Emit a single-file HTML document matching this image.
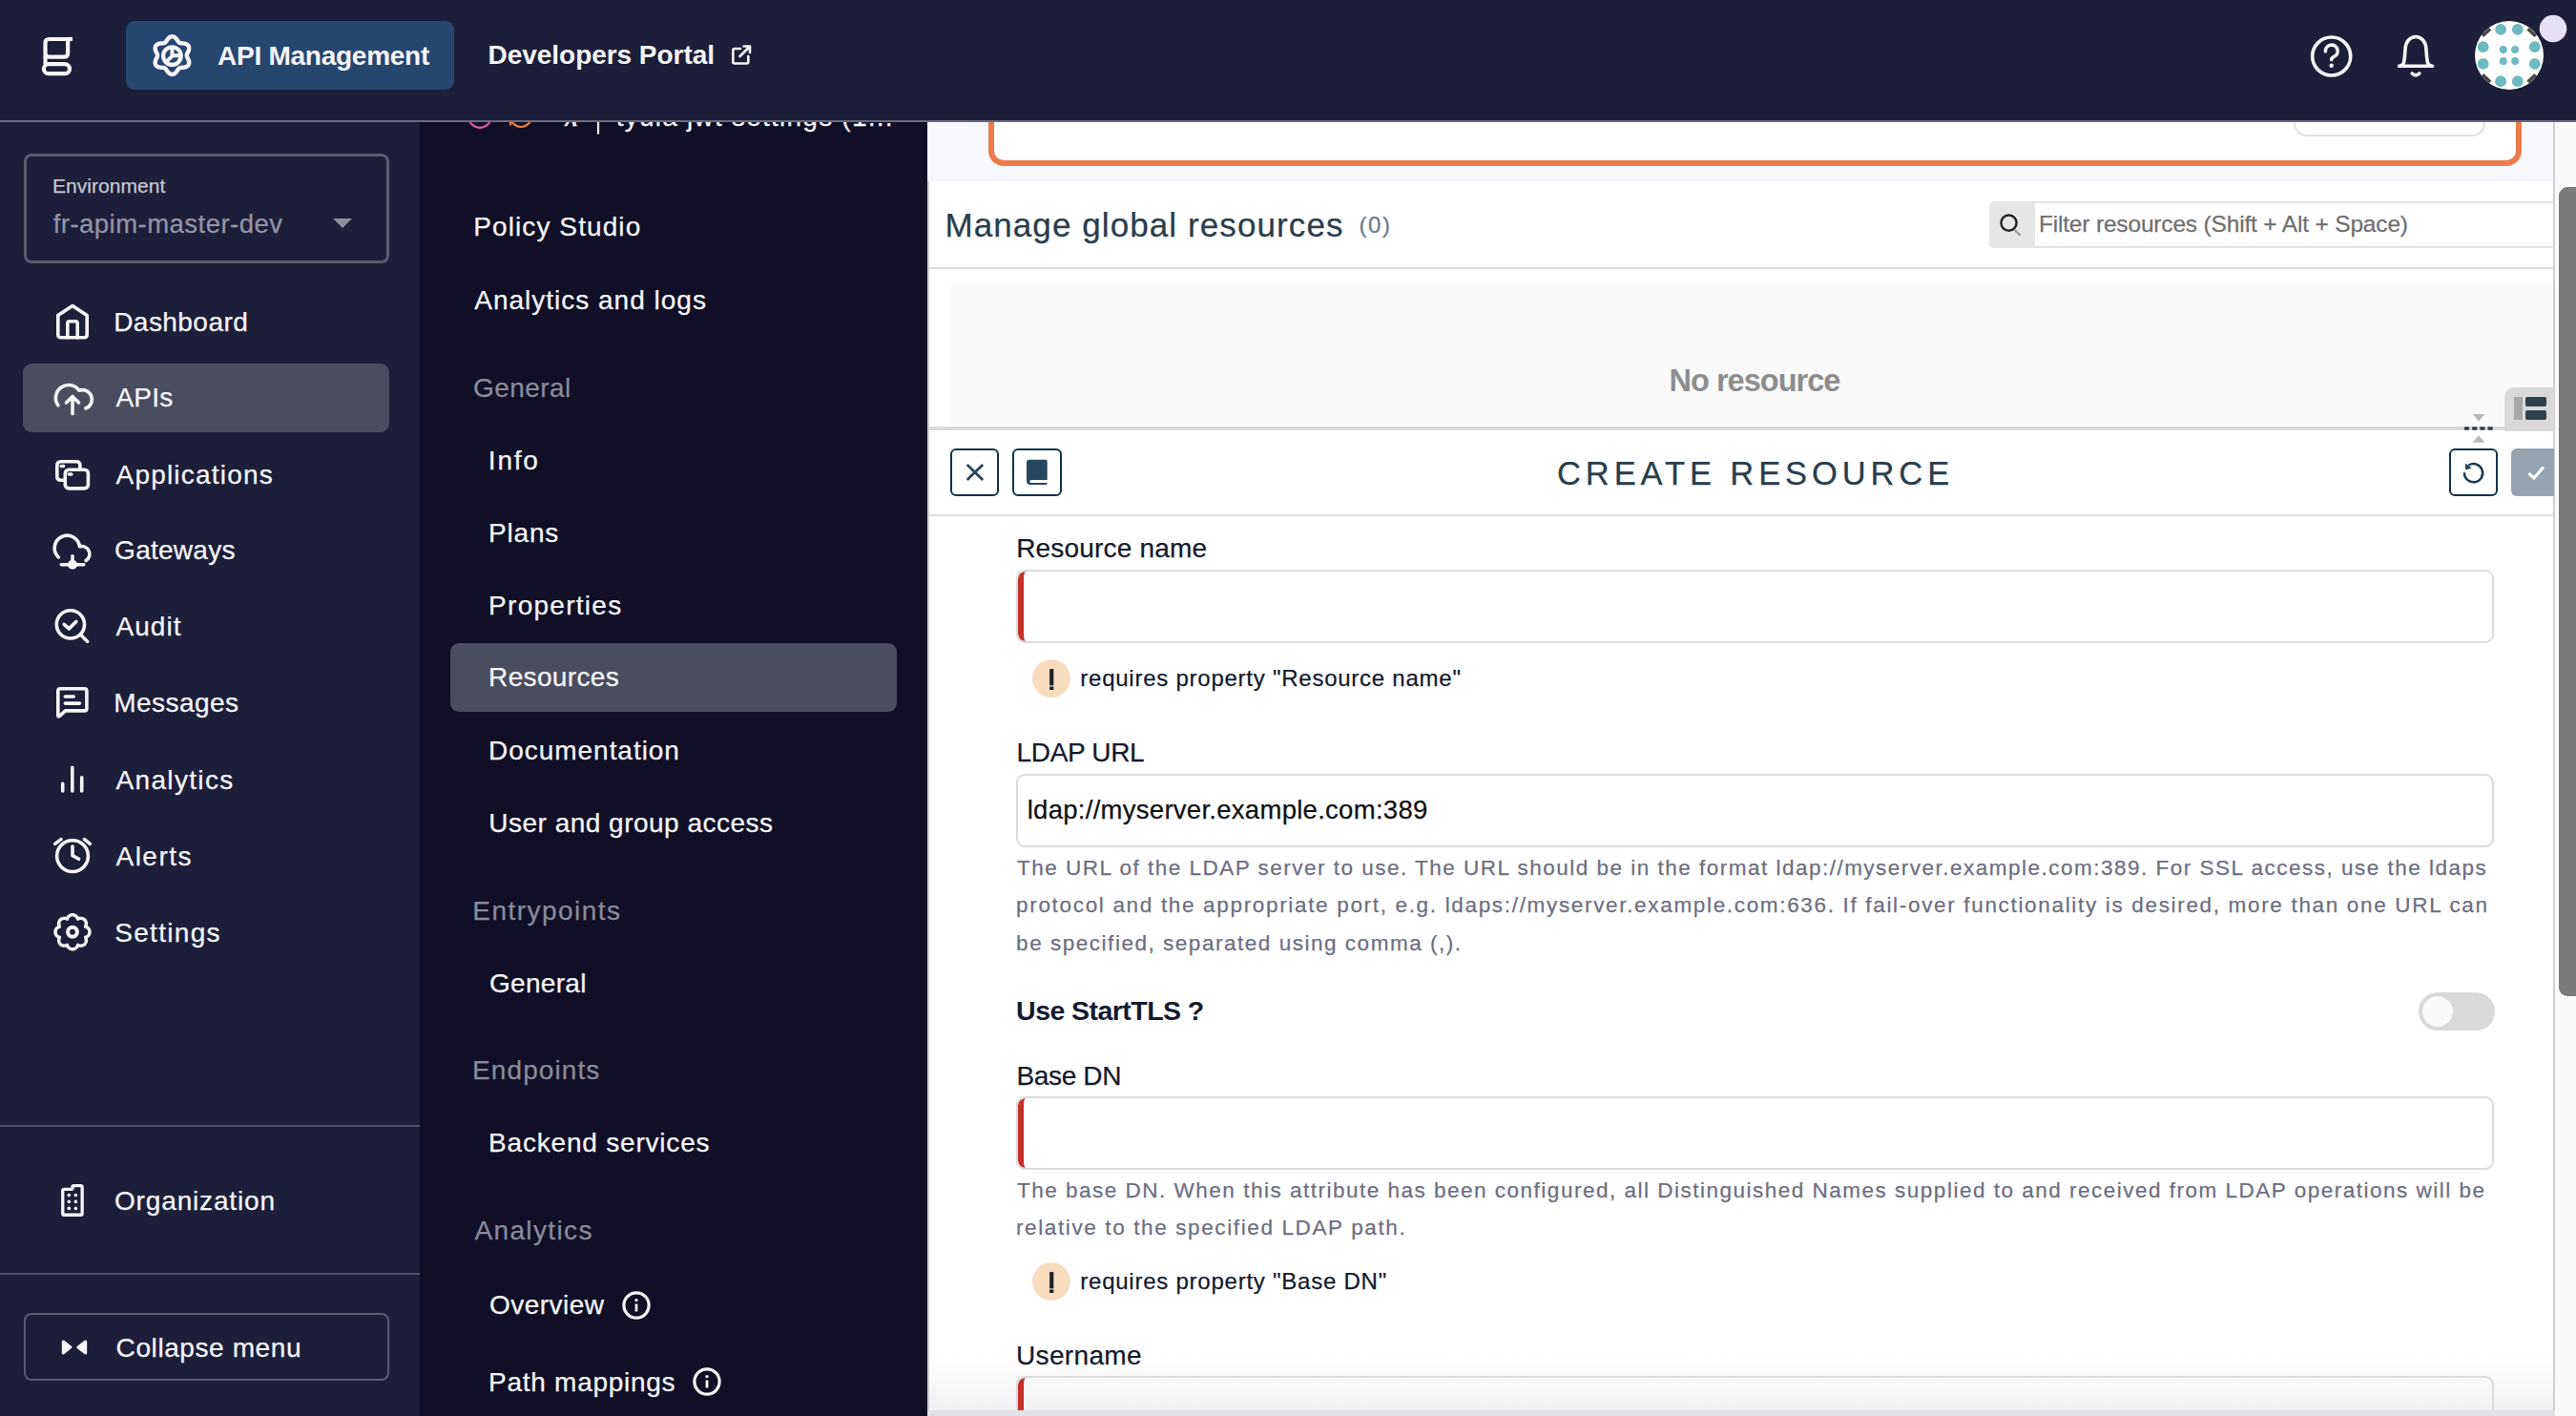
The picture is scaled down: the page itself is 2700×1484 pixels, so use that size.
<!DOCTYPE html>
<html><head><meta charset="utf-8"><style>
html,body{margin:0;padding:0}
body{width:2700px;height:1484px;overflow:hidden;position:relative;font-family:"Liberation Sans",sans-serif;background:#fff}
.t{position:absolute;white-space:pre}
.t4{-webkit-text-stroke:0.25px currentColor}
</style></head><body>
<div style="position:absolute;left:0px;top:0px;width:2700px;height:1484px;background:#ffffff"></div>
<div style="position:absolute;left:0px;top:128px;width:440px;height:1356px;background:#1d1e3a"></div>
<div style="position:absolute;left:440px;top:128px;width:532px;height:1356px;background:#100f27"></div>
<div style="position:absolute;left:972px;top:128px;width:1705px;height:62px;background:#f6f8fc"></div>
<div style="position:absolute;left:1036px;top:60px;width:1607px;height:114px;border:6px solid #ec7a4b;border-radius:16px;background:#fff;box-sizing:border-box"></div>
<div style="position:absolute;left:2404px;top:60px;width:201px;height:83px;border:2px solid #e2e2e2;border-radius:14px;box-sizing:border-box"></div>
<div style="position:absolute;left:972px;top:190px;width:2px;height:1294px;background:#cfcfcf"></div>
<div style="position:absolute;left:2676px;top:128px;width:2px;height:1356px;background:#d0d0d0"></div>
<div style="position:absolute;left:2678px;top:128px;width:22px;height:1356px;background:#fafafa"></div>
<div style="position:absolute;left:2682px;top:196px;width:18px;height:848px;background:#7b7b7b;border-radius:9px 0 0 9px"></div>
<svg style="position:absolute;left:470px;top:100px" width="500" height="50" viewBox="0 0 500 50" fill="none"><circle cx="33" cy="22" r="11.8" stroke="#e05aa6" stroke-width="2.2"/><circle cx="76" cy="22" r="11" stroke="#ee7f3b" stroke-width="2.2"/><path d="M65 0 V31.5" stroke="#ee7f3b" stroke-width="2.2"/><path d="M157 40.5 V28" stroke="#f5f5fa" stroke-width="2.2"/></svg>
<div class="t t4" style="left:591.10px;top:101.50px;font-size:28px;line-height:42px;color:#f5f5fa;letter-spacing:-4.900px;font-weight:400;">x/</div>
<div class="t t4" style="left:645.80px;top:101.50px;font-size:28px;line-height:42px;color:#f5f5fa;letter-spacing:1.230px;font-weight:400;">tyuia jwt settings (1...</div>
<div style="position:absolute;left:0px;top:0px;width:2700px;height:126px;background:#1d1e3a"></div>
<div style="position:absolute;left:0px;top:126px;width:2700px;height:2px;background:#6a6b7f"></div>
<div style="position:absolute;left:132px;top:22px;width:344px;height:72px;background:#27466f;border-radius:9px"></div>
<div class="t" style="left:228.00px;top:37.50px;font-size:28px;line-height:42px;color:#f5f5fa;letter-spacing:-0.254px;font-weight:700;">API Management</div>
<div class="t" style="left:511.60px;top:37.30px;font-size:28px;line-height:42px;color:#f5f5fa;letter-spacing:-0.044px;font-weight:700;">Developers Portal</div>
<div style="position:absolute;left:25px;top:161px;width:383px;height:115px;border:3px solid #5b5c70;border-radius:8px;box-sizing:border-box"></div>
<div class="t t4" style="left:54.90px;top:178.80px;font-size:21px;line-height:32px;color:#c8c8d2;letter-spacing:0.060px;font-weight:400;">Environment</div>
<div class="t t4" style="left:55.70px;top:214.20px;font-size:27.5px;line-height:41px;color:#9394a4;letter-spacing:0.476px;font-weight:400;">fr-apim-master-dev</div>
<div style="position:absolute;left:24px;top:381px;width:384px;height:72px;background:#4a4d60;border-radius:9px"></div>
<div class="t t4" style="left:119.20px;top:316.60px;font-size:28px;line-height:42px;color:#f5f5fa;letter-spacing:0.450px;font-weight:400;">Dashboard</div>
<div class="t t4" style="left:121.50px;top:396.00px;font-size:28px;line-height:42px;color:#f5f5fa;letter-spacing:0.167px;font-weight:400;">APIs</div>
<div class="t t4" style="left:121.50px;top:477.10px;font-size:28px;line-height:42px;color:#f5f5fa;letter-spacing:1.200px;font-weight:400;">Applications</div>
<div class="t t4" style="left:120.10px;top:556.00px;font-size:28px;line-height:42px;color:#f5f5fa;letter-spacing:0.257px;font-weight:400;">Gateways</div>
<div class="t t4" style="left:121.50px;top:636.10px;font-size:28px;line-height:42px;color:#f5f5fa;letter-spacing:1.025px;font-weight:400;">Audit</div>
<div class="t t4" style="left:119.20px;top:715.50px;font-size:28px;line-height:42px;color:#f5f5fa;letter-spacing:0.457px;font-weight:400;">Messages</div>
<div class="t t4" style="left:121.50px;top:796.50px;font-size:28px;line-height:42px;color:#f5f5fa;letter-spacing:1.337px;font-weight:400;">Analytics</div>
<div class="t t4" style="left:121.50px;top:876.50px;font-size:28px;line-height:42px;color:#f5f5fa;letter-spacing:1.480px;font-weight:400;">Alerts</div>
<div class="t t4" style="left:120.20px;top:956.50px;font-size:28px;line-height:42px;color:#f5f5fa;letter-spacing:1.314px;font-weight:400;">Settings</div>
<div style="position:absolute;left:0px;top:1179px;width:440px;height:2px;#5b5c70;background:#4d4e63"></div>
<div class="t t4" style="left:120.00px;top:1237.50px;font-size:28px;line-height:42px;color:#f5f5fa;letter-spacing:0.845px;font-weight:400;">Organization</div>
<div style="position:absolute;left:0px;top:1334px;width:440px;height:2px;background:#4d4e63"></div>
<div style="position:absolute;left:25px;top:1376px;width:383px;height:71px;border:2px solid #5b5c70;border-radius:8px;box-sizing:border-box"></div>
<div class="t t4" style="left:121.60px;top:1391.50px;font-size:28px;line-height:42px;color:#f5f5fa;letter-spacing:0.592px;font-weight:400;">Collapse menu</div>
<div style="position:absolute;left:472px;top:674px;width:468px;height:72px;background:#4a4d60;border-radius:9px"></div>
<div class="t t4" style="left:496.20px;top:217.30px;font-size:28px;line-height:42px;color:#f5f5fa;letter-spacing:1.100px;font-weight:400;">Policy Studio</div>
<div class="t t4" style="left:497.30px;top:294.10px;font-size:28px;line-height:42px;color:#f5f5fa;letter-spacing:0.994px;font-weight:400;">Analytics and logs</div>
<div class="t t4" style="left:496.00px;top:385.50px;font-size:28px;line-height:42px;color:#8a8a9c;letter-spacing:0.450px;font-weight:400;">General</div>
<div class="t t4" style="left:511.80px;top:461.80px;font-size:28px;line-height:42px;color:#f5f5fa;letter-spacing:1.800px;font-weight:400;">Info</div>
<div class="t t4" style="left:512.10px;top:537.70px;font-size:28px;line-height:42px;color:#f5f5fa;letter-spacing:0.800px;font-weight:400;">Plans</div>
<div class="t t4" style="left:512.10px;top:613.50px;font-size:28px;line-height:42px;color:#f5f5fa;letter-spacing:1.278px;font-weight:400;">Properties</div>
<div class="t t4" style="left:512.10px;top:689.20px;font-size:28px;line-height:42px;color:#f5f5fa;letter-spacing:0.350px;font-weight:400;">Resources</div>
<div class="t t4" style="left:512.10px;top:765.50px;font-size:28px;line-height:42px;color:#f5f5fa;letter-spacing:0.958px;font-weight:400;">Documentation</div>
<div class="t t4" style="left:512.30px;top:842.20px;font-size:28px;line-height:42px;color:#f5f5fa;letter-spacing:0.490px;font-weight:400;">User and group access</div>
<div class="t t4" style="left:495.30px;top:934.00px;font-size:28px;line-height:42px;color:#8a8a9c;letter-spacing:1.460px;font-weight:400;">Entrypoints</div>
<div class="t t4" style="left:513.00px;top:1009.50px;font-size:28px;line-height:42px;color:#f5f5fa;letter-spacing:0.300px;font-weight:400;">General</div>
<div class="t t4" style="left:495.10px;top:1101.10px;font-size:28px;line-height:42px;color:#8a8a9c;letter-spacing:1.087px;font-weight:400;">Endpoints</div>
<div class="t t4" style="left:512.10px;top:1177.30px;font-size:28px;line-height:42px;color:#f5f5fa;letter-spacing:0.800px;font-weight:400;">Backend services</div>
<div class="t t4" style="left:497.40px;top:1269.20px;font-size:28px;line-height:42px;color:#8a8a9c;letter-spacing:1.375px;font-weight:400;">Analytics</div>
<div class="t t4" style="left:513.10px;top:1347.10px;font-size:28px;line-height:42px;color:#f5f5fa;letter-spacing:0.443px;font-weight:400;">Overview</div>
<div class="t t4" style="left:512.10px;top:1427.50px;font-size:28px;line-height:42px;color:#f5f5fa;letter-spacing:0.725px;font-weight:400;">Path mappings</div>
<div class="t t4" style="left:990.40px;top:209.50px;font-size:35px;line-height:52px;color:#2b3d4c;letter-spacing:1.095px;font-weight:400;">Manage global resources</div>
<div class="t t4" style="left:1424.60px;top:217.50px;font-size:24px;line-height:36px;color:#6a7c88;letter-spacing:1.500px;font-weight:400;">(0)</div>
<div style="position:absolute;left:974px;top:280px;width:1702px;height:2px;background:#dedede"></div>
<div style="position:absolute;left:2085px;top:211px;width:592px;height:49px;border:2px solid #e3e3e3;border-right:none;border-radius:6px 0 0 6px;box-sizing:border-box"></div>
<div style="position:absolute;left:2085px;top:211px;width:48px;height:49px;background:#e6e6e6;border-radius:6px 0 0 6px"></div>
<div class="t t4" style="left:2136.90px;top:216.00px;font-size:24.5px;line-height:37px;color:#6f6f6f;letter-spacing:-0.173px;font-weight:400;">Filter resources (Shift + Alt + Space)</div>
<div style="position:absolute;left:996px;top:298px;width:1680px;height:151px;background:#fafafa"></div>
<div class="t" style="left:1749.50px;top:374.50px;font-size:32.5px;line-height:49px;color:#8d8d8d;letter-spacing:-0.980px;font-weight:700;">No resource</div>
<div style="position:absolute;left:974px;top:447px;width:1702px;height:4px;background:#d9d9d9"></div>
<div class="t t4" style="left:1632.00px;top:469.90px;font-size:34.5px;line-height:52px;color:#2a3d4b;letter-spacing:4.907px;font-weight:400;">CREATE RESOURCE</div>
<div style="position:absolute;left:974px;top:539px;width:1702px;height:2px;background:#e0e0e0"></div>
<div style="position:absolute;left:996px;top:470px;width:51px;height:50px;border:2px solid #12324a;border-radius:6px;box-sizing:border-box"></div>
<div style="position:absolute;left:1061px;top:470px;width:52px;height:50px;border:2px solid #12324a;border-radius:6px;box-sizing:border-box"></div>
<div style="position:absolute;left:2567px;top:470px;width:51px;height:50px;border:2px solid #12324a;border-radius:6px;box-sizing:border-box"></div>
<div style="position:absolute;left:2632px;top:470px;width:45px;height:50px;background:#94a3ae;border-radius:6px 0 0 6px"></div>
<div class="t t4" style="left:1065.20px;top:554.40px;font-size:28px;line-height:42px;color:#141a2e;letter-spacing:0.183px;font-weight:400;">Resource name</div>
<div style="position:absolute;left:1065px;top:596.5px;width:1549px;height:77px;border:2px solid #dcdcdc;border-radius:9px;box-sizing:border-box;overflow:hidden;background:#fff"><div style="position:absolute;left:0;top:0;bottom:0;width:30px;border-left:6.5px solid #c4302a;border-radius:8px 0 0 8px;box-sizing:border-box"></div></div>
<div style="position:absolute;left:1082px;top:691px;width:40px;height:40px;background:#f8dcc0;border-radius:50%"></div>
<div class="t t4" style="left:1132.30px;top:693.30px;font-size:24px;line-height:36px;color:#141a2e;letter-spacing:0.753px;font-weight:400;">requires property &quot;Resource name&quot;</div>
<div class="t t4" style="left:1065.50px;top:768.40px;font-size:28px;line-height:42px;color:#141a2e;letter-spacing:-0.329px;font-weight:400;">LDAP URL</div>
<div style="position:absolute;left:1065px;top:810.5px;width:1549px;height:77px;border:2px solid #dcdcdc;border-radius:9px;box-sizing:border-box"></div>
<div class="t t4" style="left:1076.70px;top:828.00px;font-size:27.5px;line-height:41px;color:#111111;letter-spacing:0.280px;font-weight:400;">ldap://myserver.example.com:389</div>
<div class="t t4" style="left:1066.00px;top:892.50px;font-size:22.5px;line-height:34px;color:#6d6f80;letter-spacing:1.493px;font-weight:400;">The URL of the LDAP server to use. The URL should be in the format ldap://myserver.example.com:389. For SSL access, use the ldaps</div>
<div class="t t4" style="left:1065.10px;top:932.00px;font-size:22.5px;line-height:34px;color:#6d6f80;letter-spacing:1.670px;font-weight:400;">protocol and the appropriate port, e.g. ldaps://myserver.example.com:636. If fail-over functionality is desired, more than one URL can</div>
<div class="t t4" style="left:1065.10px;top:972.00px;font-size:22.5px;line-height:34px;color:#6d6f80;letter-spacing:1.526px;font-weight:400;">be specified, separated using comma (,).</div>
<div class="t" style="left:1065.10px;top:1038.40px;font-size:28.5px;line-height:43px;color:#141a2e;letter-spacing:-0.546px;font-weight:700;">Use StartTLS ?</div>
<div style="position:absolute;left:2535px;top:1040px;width:80px;height:40px;background:#d9d9d9;border-radius:20px"></div>
<div style="position:absolute;left:2539px;top:1044px;width:32px;height:32px;background:#fafafa;border-radius:50%"></div>
<div class="t t4" style="left:1065.50px;top:1106.60px;font-size:28px;line-height:42px;color:#141a2e;letter-spacing:-0.350px;font-weight:400;">Base DN</div>
<div style="position:absolute;left:1065px;top:1148.5px;width:1549px;height:77px;border:2px solid #dcdcdc;border-radius:9px;box-sizing:border-box;overflow:hidden;background:#fff"><div style="position:absolute;left:0;top:0;bottom:0;width:30px;border-left:6.5px solid #c4302a;border-radius:8px 0 0 8px;box-sizing:border-box"></div></div>
<div class="t t4" style="left:1066.00px;top:1230.50px;font-size:22.5px;line-height:34px;color:#6d6f80;letter-spacing:1.502px;font-weight:400;">The base DN. When this attribute has been configured, all Distinguished Names supplied to and received from LDAP operations will be</div>
<div class="t t4" style="left:1065.00px;top:1269.50px;font-size:22.5px;line-height:34px;color:#6d6f80;letter-spacing:1.617px;font-weight:400;">relative to the specified LDAP path.</div>
<div style="position:absolute;left:1082px;top:1323px;width:40px;height:40px;background:#f8dcc0;border-radius:50%"></div>
<div class="t t4" style="left:1132.30px;top:1325.30px;font-size:24px;line-height:36px;color:#141a2e;letter-spacing:0.758px;font-weight:400;">requires property &quot;Base DN&quot;</div>
<div style="position:absolute;left:974px;top:1420px;width:1702px;height:58px;background:linear-gradient(rgba(238,238,240,0),rgba(238,238,240,0.4) 50%,rgba(236,236,239,0.75))"></div>
<div class="t t4" style="left:1065.00px;top:1399.60px;font-size:28px;line-height:42px;color:#141a2e;letter-spacing:0.343px;font-weight:400;">Username</div>
<div style="position:absolute;left:1065px;top:1442px;width:1549px;height:77px;border:2px solid #dcdcdc;border-radius:9px;box-sizing:border-box;overflow:hidden;background:transparent"><div style="position:absolute;left:0;top:0;bottom:0;width:30px;border-left:6.5px solid #c4302a;border-radius:8px 0 0 8px;box-sizing:border-box"></div></div>
<div style="position:absolute;left:972px;top:1478px;width:1706px;height:6px;background:#e0e2e6"></div>
<svg style="position:absolute;left:0px;top:0px" width="120" height="126" viewBox="0 0 120 126" fill="none"><g stroke="#f5f5fa" stroke-width="4.2" fill="none" stroke-linejoin="round"><path d="M75.9 41 H51.5 Q47.5 41 47.5 45 V55.7 Q47.5 59.7 51.5 59.7 H67.1 Q71.1 59.7 71.1 55.7 V41"/><path d="M47.5 58 V67.2"/><path d="M50.9 67.2 H68 A4.95 4.95 0 0 1 68 77.1 H50.9 A4.95 4.95 0 0 1 50.9 67.2 Z"/></g><rect x="71" y="38.9" width="5" height="3.8" fill="#f5f5fa"/></svg>
<svg style="position:absolute;left:150px;top:25px" width="60" height="65" viewBox="0 0 60 65" fill="none"><path d="M45.70 33.10 L45.72 33.37 L45.77 33.64 L45.84 33.91 L45.93 34.19 L46.04 34.47 L46.16 34.76 L46.29 35.05 L46.43 35.35 L46.58 35.66 L46.74 35.98 L46.90 36.31 L47.06 36.64 L47.21 36.98 L47.36 37.33 L47.51 37.68 L47.64 38.04 L47.76 38.41 L47.87 38.78 L47.97 39.15 L48.04 39.52 L48.10 39.89 L48.13 40.26 L48.14 40.63 L48.13 41.00 L48.10 41.35 L48.04 41.70 L47.95 42.04 L47.84 42.37 L47.71 42.69 L47.55 43.00 L47.36 43.29 L47.15 43.57 L46.92 43.83 L46.67 44.07 L46.40 44.30 L46.10 44.51 L45.79 44.70 L45.47 44.87 L45.13 45.03 L44.78 45.17 L44.42 45.29 L44.05 45.39 L43.68 45.48 L43.30 45.56 L42.92 45.62 L42.54 45.68 L42.17 45.72 L41.79 45.76 L41.43 45.78 L41.07 45.81 L40.71 45.83 L40.37 45.86 L40.03 45.89 L39.71 45.92 L39.40 45.96 L39.10 46.01 L38.82 46.07 L38.55 46.14 L38.29 46.23 L38.05 46.35 L37.83 46.50 L37.62 46.68 L37.42 46.87 L37.22 47.09 L37.03 47.32 L36.84 47.57 L36.66 47.84 L36.47 48.11 L36.27 48.40 L36.07 48.69 L35.87 48.99 L35.66 49.30 L35.44 49.60 L35.22 49.91 L34.98 50.21 L34.74 50.50 L34.48 50.79 L34.22 51.07 L33.94 51.34 L33.66 51.59 L33.37 51.82 L33.06 52.04 L32.75 52.23 L32.43 52.41 L32.10 52.55 L31.77 52.68 L31.43 52.77 L31.09 52.84 L30.75 52.89 L30.40 52.90 L30.05 52.89 L29.71 52.84 L29.37 52.77 L29.03 52.68 L28.70 52.55 L28.37 52.41 L28.05 52.23 L27.74 52.04 L27.43 51.82 L27.14 51.59 L26.86 51.34 L26.58 51.07 L26.32 50.79 L26.06 50.50 L25.82 50.21 L25.58 49.91 L25.36 49.60 L25.14 49.30 L24.93 48.99 L24.73 48.69 L24.53 48.40 L24.33 48.11 L24.14 47.84 L23.96 47.57 L23.77 47.32 L23.58 47.09 L23.38 46.87 L23.18 46.68 L22.97 46.50 L22.75 46.35 L22.51 46.23 L22.25 46.14 L21.98 46.07 L21.70 46.01 L21.40 45.96 L21.09 45.92 L20.77 45.89 L20.43 45.86 L20.09 45.83 L19.73 45.81 L19.37 45.78 L19.01 45.76 L18.63 45.72 L18.26 45.68 L17.88 45.62 L17.50 45.56 L17.12 45.48 L16.75 45.39 L16.38 45.29 L16.02 45.17 L15.67 45.03 L15.33 44.87 L15.01 44.70 L14.70 44.51 L14.40 44.30 L14.13 44.07 L13.88 43.83 L13.65 43.57 L13.44 43.29 L13.25 43.00 L13.09 42.69 L12.96 42.37 L12.85 42.04 L12.76 41.70 L12.70 41.35 L12.67 41.00 L12.66 40.63 L12.67 40.26 L12.70 39.89 L12.76 39.52 L12.83 39.15 L12.93 38.78 L13.04 38.41 L13.16 38.04 L13.29 37.68 L13.44 37.33 L13.59 36.98 L13.74 36.64 L13.90 36.31 L14.06 35.98 L14.22 35.66 L14.37 35.35 L14.51 35.05 L14.64 34.76 L14.76 34.47 L14.87 34.19 L14.96 33.91 L15.03 33.64 L15.08 33.37 L15.10 33.10 L15.08 32.83 L15.03 32.56 L14.96 32.29 L14.87 32.01 L14.76 31.73 L14.64 31.44 L14.51 31.15 L14.37 30.85 L14.22 30.54 L14.06 30.22 L13.90 29.89 L13.74 29.56 L13.59 29.22 L13.44 28.87 L13.29 28.52 L13.16 28.16 L13.04 27.79 L12.93 27.42 L12.83 27.05 L12.76 26.68 L12.70 26.31 L12.67 25.94 L12.66 25.57 L12.67 25.20 L12.70 24.85 L12.76 24.50 L12.85 24.16 L12.96 23.83 L13.09 23.51 L13.25 23.20 L13.44 22.91 L13.65 22.63 L13.88 22.37 L14.13 22.13 L14.40 21.90 L14.70 21.69 L15.01 21.50 L15.33 21.33 L15.67 21.17 L16.02 21.03 L16.38 20.91 L16.75 20.81 L17.12 20.72 L17.50 20.64 L17.88 20.58 L18.26 20.52 L18.63 20.48 L19.01 20.44 L19.37 20.42 L19.73 20.39 L20.09 20.37 L20.43 20.34 L20.77 20.31 L21.09 20.28 L21.40 20.24 L21.70 20.19 L21.98 20.13 L22.25 20.06 L22.51 19.97 L22.75 19.85 L22.97 19.70 L23.18 19.52 L23.38 19.33 L23.58 19.11 L23.77 18.88 L23.96 18.63 L24.14 18.36 L24.33 18.09 L24.53 17.80 L24.73 17.51 L24.93 17.21 L25.14 16.90 L25.36 16.60 L25.58 16.29 L25.82 15.99 L26.06 15.70 L26.32 15.41 L26.58 15.13 L26.86 14.86 L27.14 14.61 L27.43 14.38 L27.74 14.16 L28.05 13.97 L28.37 13.79 L28.70 13.65 L29.03 13.52 L29.37 13.43 L29.71 13.36 L30.05 13.31 L30.40 13.30 L30.75 13.31 L31.09 13.36 L31.43 13.43 L31.77 13.52 L32.10 13.65 L32.43 13.79 L32.75 13.97 L33.06 14.16 L33.37 14.38 L33.66 14.61 L33.94 14.86 L34.22 15.13 L34.48 15.41 L34.74 15.70 L34.98 15.99 L35.22 16.29 L35.44 16.60 L35.66 16.90 L35.87 17.21 L36.07 17.51 L36.27 17.80 L36.47 18.09 L36.66 18.36 L36.84 18.63 L37.03 18.88 L37.22 19.11 L37.42 19.33 L37.62 19.52 L37.83 19.70 L38.05 19.85 L38.29 19.97 L38.55 20.06 L38.82 20.13 L39.10 20.19 L39.40 20.24 L39.71 20.28 L40.03 20.31 L40.37 20.34 L40.71 20.37 L41.07 20.39 L41.43 20.42 L41.79 20.44 L42.17 20.48 L42.54 20.52 L42.92 20.58 L43.30 20.64 L43.68 20.72 L44.05 20.81 L44.42 20.91 L44.78 21.03 L45.13 21.17 L45.47 21.33 L45.79 21.50 L46.10 21.69 L46.40 21.90 L46.67 22.13 L46.92 22.37 L47.15 22.63 L47.36 22.91 L47.55 23.20 L47.71 23.51 L47.84 23.83 L47.95 24.16 L48.04 24.50 L48.10 24.85 L48.13 25.20 L48.14 25.57 L48.13 25.94 L48.10 26.31 L48.04 26.68 L47.97 27.05 L47.87 27.42 L47.76 27.79 L47.64 28.16 L47.51 28.52 L47.36 28.87 L47.21 29.22 L47.06 29.56 L46.90 29.89 L46.74 30.22 L46.58 30.54 L46.43 30.85 L46.29 31.15 L46.16 31.44 L46.04 31.73 L45.93 32.01 L45.84 32.29 L45.77 32.56 L45.72 32.83Z" stroke="#f5f5fa" stroke-width="4.4" stroke-linejoin="round"/><circle cx="30.4" cy="33.6" r="9.3" stroke="#f5f5fa" stroke-width="4.2"/><path d="M30.4 24.5 V33.3 H39.5 M30.6 33.6 L24 40.2" stroke="#f5f5fa" stroke-width="4"/></svg>
<svg style="position:absolute;left:760px;top:40px" width="34" height="34" viewBox="0 0 34 34" fill="none"><g stroke="#f5f5fa" stroke-width="2.6" fill="none" stroke-linecap="round" stroke-linejoin="round"><path d="M16 11 H10 Q8.3 11 8.3 12.7 V25 Q8.3 26.5 10 26.5 H22.5 Q24.3 26.5 24.3 25 V19"/><path d="M15.5 19 L26 8.5 M19.5 8.5 H26 V15"/></g></svg>
<svg style="position:absolute;left:2410px;top:25px" width="70" height="70" viewBox="0 0 70 70" fill="none"><circle cx="33.7" cy="34" r="20" stroke="#f5f5fa" stroke-width="3.6"/><path d="M27.4 28.9 A6.4 6.4 0 1 1 36.4 34.4 Q33.7 35.6 33.7 37.6" stroke="#f5f5fa" stroke-width="3.6" stroke-linecap="round"/><circle cx="33.7" cy="43.7" r="2.2" fill="#f5f5fa"/></svg>
<svg style="position:absolute;left:2500px;top:25px" width="70" height="70" viewBox="0 0 70 70" fill="none"><g stroke="#f5f5fa" stroke-width="3.6" fill="none" stroke-linejoin="round" stroke-linecap="round"><path d="M19.6 40.5 C20.6 35 20.8 30 21.1 26 C21.6 18 26.5 13.5 32 13.5 C37.5 13.5 42.4 18 42.9 26 C43.2 30 43.4 35 44.4 40.5 Q45.5 43.5 49.5 44.3 H14.5 Q18.5 43.5 19.6 40.5Z"/><path d="M28.2 52 Q32 55.5 35.8 52"/></g></svg>
<svg style="position:absolute;left:2590px;top:17.7px" width="80" height="80" viewBox="0 0 80 80" fill="none"><circle cx="40" cy="40" r="36" fill="#ffffff"/><circle cx="31.1" cy="12.9" r="5.9" fill="#6fb9c1"/><circle cx="48.8" cy="12.9" r="5.9" fill="#6fb9c1"/><circle cx="12.7" cy="31.2" r="5.9" fill="#6fb9c1"/><circle cx="66.8" cy="31.2" r="5.9" fill="#6fb9c1"/><circle cx="12.7" cy="48.9" r="5.9" fill="#6fb9c1"/><circle cx="66.8" cy="48.9" r="5.9" fill="#6fb9c1"/><circle cx="31.1" cy="67.2" r="5.9" fill="#6fb9c1"/><circle cx="48.8" cy="67.2" r="5.9" fill="#6fb9c1"/><circle cx="33.8" cy="33.9" r="4" fill="#6fb9c1"/><circle cx="46.1" cy="33.9" r="4" fill="#6fb9c1"/><circle cx="33.8" cy="45.9" r="4" fill="#6fb9c1"/><circle cx="46.1" cy="45.9" r="4" fill="#6fb9c1"/><path d="M12.0 19.7 L20.1 12.2" stroke="#474747" stroke-width="3.6"/><path d="M59.6 12.2 L67.7 19.7" stroke="#474747" stroke-width="3.6"/><path d="M12.0 60.4 L20.1 67.9" stroke="#474747" stroke-width="3.6"/><path d="M59.6 67.9 L67.7 60.4" stroke="#474747" stroke-width="3.6"/></svg>
<svg style="position:absolute;left:2660px;top:14px" width="32" height="32" viewBox="0 0 32 32" fill="none"><circle cx="16" cy="16" r="14.3" fill="#e6e0f7"/></svg>
<svg style="position:absolute;left:345px;top:225px" width="28" height="18" viewBox="0 0 28 18" fill="none"><path d="M4.1 3.9 H24 L14.05 14 Z" fill="#9091a0"/></svg>
<svg style="position:absolute;left:52px;top:312px" width="48" height="50" viewBox="0 0 48 50" fill="none"><g stroke="#f5f5fa" stroke-width="3.6" fill="none" stroke-linejoin="round" stroke-linecap="round"><path d="M8.8 18.5 L24 8.5 L39.2 18.5 V38.7 Q39.2 41.7 36.2 41.7 H11.8 Q8.8 41.7 8.8 38.7 Z"/><path d="M18.8 41.7 V26.8 Q18.8 24.8 20.8 24.8 H27.2 Q29.2 24.8 29.2 26.8 V41.7"/></g></svg>
<svg style="position:absolute;left:52px;top:392px" width="48" height="48" viewBox="0 0 48 48" fill="none"><g stroke="#f5f5fa" stroke-width="3.6" fill="none" stroke-linejoin="round" stroke-linecap="round"><path d="M8.9 32.8 A12.8 12.8 0 1 1 31 17.2 A7.6 7.6 0 0 1 37.7 36"/><path d="M24 41.8 V23.5 M17.5 30 L24 23.5 L30.5 30"/></g></svg>
<svg style="position:absolute;left:52px;top:476px" width="48" height="44" viewBox="0 0 48 44" fill="none"><g stroke="#f5f5fa" stroke-width="3.6" fill="none" stroke-linejoin="round" stroke-linecap="round"><path d="M7.8 21 V11.8 Q7.8 7.8 11.8 7.8 H27.9 Q31.9 7.8 31.9 11.8 V14"/><path d="M7.8 21 V23.2 Q7.8 27.2 11.8 27.2 H14.5"/><rect x="16.3" y="16.2" width="24.1" height="19.7" rx="4"/><path d="M12.2 12.5 H14.6 M20.4 21 H22.8"/></g></svg>
<svg style="position:absolute;left:52px;top:552px" width="48" height="48" viewBox="0 0 48 48" fill="none"><g stroke="#f5f5fa" stroke-width="3.6" fill="none" stroke-linejoin="round" stroke-linecap="round"><path d="M9.3 32 A13.2 13.2 0 1 1 31.5 20.8 A8.2 8.2 0 0 1 38.1 35.6"/><path d="M12.3 39.8 H35.7 M24 30.8 V37"/></g><circle cx="24" cy="39.8" r="5" fill="#f5f5fa"/></svg>
<svg style="position:absolute;left:52px;top:630px" width="48" height="50" viewBox="0 0 48 50" fill="none"><g stroke="#f5f5fa" stroke-width="3.6" fill="none" stroke-linejoin="round" stroke-linecap="round"><circle cx="21.9" cy="24.4" r="14.6"/><path d="M32.8 35.5 L39.6 42.3"/><path d="M15.2 24.3 L20.3 28.9 L27.8 21.5"/></g></svg>
<svg style="position:absolute;left:52px;top:710px" width="48" height="48" viewBox="0 0 48 48" fill="none"><g stroke="#f5f5fa" stroke-width="3.6" fill="none" stroke-linejoin="round" stroke-linecap="round"><path d="M8.8 14.3 Q8.8 11.8 11.3 11.8 H36.4 Q38.9 11.8 38.9 14.3 V32.4 Q38.9 34.9 36.4 34.9 H16.5 L10.3 40.6 Q8.8 41.6 8.8 39.6 Z"/><path d="M16.3 20 H25.2 M16.3 27.1 H31.5"/></g></svg>
<svg style="position:absolute;left:52px;top:790px" width="48" height="48" viewBox="0 0 48 48" fill="none"><g stroke="#f5f5fa" stroke-width="3.6" fill="none" stroke-linejoin="round" stroke-linecap="round"><path d="M13.7 31.4 V38.9 M23.8 14.4 V38.9 M33.7 24.8 V38.9"/></g></svg>
<svg style="position:absolute;left:52px;top:870px" width="48" height="48" viewBox="0 0 48 48" fill="none"><g stroke="#f5f5fa" stroke-width="3.6" fill="none" stroke-linejoin="round" stroke-linecap="round"><circle cx="24" cy="27.1" r="16.4"/><path d="M24 17 V26.6 L30.6 30.3 M5.7 14.4 L12 9.6 M36.5 9.6 L42.3 14.4"/></g></svg>
<svg style="position:absolute;left:52px;top:952px" width="48" height="48" viewBox="0 0 48 48" fill="none"><path d="M42.00 24.75 L41.99 25.06 L41.96 25.38 L41.92 25.69 L41.86 26.00 L41.78 26.31 L41.68 26.61 L41.57 26.91 L41.44 27.20 L41.29 27.49 L41.12 27.77 L40.94 28.04 L40.74 28.31 L40.53 28.57 L40.30 28.81 L40.05 29.05 L39.78 29.28 L39.50 29.49 L39.20 29.69 L38.88 29.87 L38.52 30.04 L38.14 30.18 L37.67 30.27 L37.57 30.51 L37.83 30.91 L38.01 31.28 L38.14 31.65 L38.24 32.01 L38.31 32.36 L38.36 32.71 L38.39 33.06 L38.40 33.40 L38.39 33.74 L38.36 34.07 L38.31 34.40 L38.24 34.72 L38.16 35.04 L38.06 35.35 L37.95 35.65 L37.82 35.94 L37.67 36.22 L37.51 36.49 L37.34 36.76 L37.15 37.01 L36.94 37.25 L36.73 37.48 L36.50 37.69 L36.26 37.90 L36.01 38.09 L35.74 38.26 L35.47 38.42 L35.19 38.57 L34.90 38.70 L34.60 38.81 L34.29 38.91 L33.97 38.99 L33.65 39.06 L33.32 39.11 L32.99 39.14 L32.65 39.15 L32.31 39.14 L31.96 39.11 L31.61 39.06 L31.26 38.99 L30.90 38.89 L30.53 38.76 L30.16 38.58 L29.76 38.32 L29.52 38.42 L29.43 38.89 L29.29 39.27 L29.12 39.63 L28.94 39.95 L28.74 40.25 L28.53 40.53 L28.30 40.80 L28.06 41.05 L27.82 41.28 L27.56 41.49 L27.29 41.69 L27.02 41.87 L26.74 42.04 L26.45 42.19 L26.16 42.32 L25.86 42.43 L25.56 42.53 L25.25 42.61 L24.94 42.67 L24.63 42.71 L24.31 42.74 L24.00 42.75 L23.69 42.74 L23.37 42.71 L23.06 42.67 L22.75 42.61 L22.44 42.53 L22.14 42.43 L21.84 42.32 L21.55 42.19 L21.26 42.04 L20.98 41.87 L20.71 41.69 L20.44 41.49 L20.18 41.28 L19.94 41.05 L19.70 40.80 L19.47 40.53 L19.26 40.25 L19.06 39.95 L18.88 39.63 L18.71 39.27 L18.57 38.89 L18.48 38.42 L18.24 38.32 L17.84 38.58 L17.47 38.76 L17.10 38.89 L16.74 38.99 L16.39 39.06 L16.04 39.11 L15.69 39.14 L15.35 39.15 L15.01 39.14 L14.68 39.11 L14.35 39.06 L14.03 38.99 L13.71 38.91 L13.40 38.81 L13.10 38.70 L12.81 38.57 L12.53 38.42 L12.26 38.26 L11.99 38.09 L11.74 37.90 L11.50 37.69 L11.27 37.48 L11.06 37.25 L10.85 37.01 L10.66 36.76 L10.49 36.49 L10.33 36.22 L10.18 35.94 L10.05 35.65 L9.94 35.35 L9.84 35.04 L9.76 34.72 L9.69 34.40 L9.64 34.07 L9.61 33.74 L9.60 33.40 L9.61 33.06 L9.64 32.71 L9.69 32.36 L9.76 32.01 L9.86 31.65 L9.99 31.28 L10.17 30.91 L10.43 30.51 L10.33 30.27 L9.86 30.18 L9.48 30.04 L9.12 29.87 L8.80 29.69 L8.50 29.49 L8.22 29.28 L7.95 29.05 L7.70 28.81 L7.47 28.57 L7.26 28.31 L7.06 28.04 L6.88 27.77 L6.71 27.49 L6.56 27.20 L6.43 26.91 L6.32 26.61 L6.22 26.31 L6.14 26.00 L6.08 25.69 L6.04 25.38 L6.01 25.06 L6.00 24.75 L6.01 24.44 L6.04 24.12 L6.08 23.81 L6.14 23.50 L6.22 23.19 L6.32 22.89 L6.43 22.59 L6.56 22.30 L6.71 22.01 L6.88 21.73 L7.06 21.46 L7.26 21.19 L7.47 20.93 L7.70 20.69 L7.95 20.45 L8.22 20.22 L8.50 20.01 L8.80 19.81 L9.12 19.63 L9.48 19.46 L9.86 19.32 L10.33 19.23 L10.43 18.99 L10.17 18.59 L9.99 18.22 L9.86 17.85 L9.76 17.49 L9.69 17.14 L9.64 16.79 L9.61 16.44 L9.60 16.10 L9.61 15.76 L9.64 15.43 L9.69 15.10 L9.76 14.78 L9.84 14.46 L9.94 14.15 L10.05 13.85 L10.18 13.56 L10.33 13.28 L10.49 13.01 L10.66 12.74 L10.85 12.49 L11.06 12.25 L11.27 12.02 L11.50 11.81 L11.74 11.60 L11.99 11.41 L12.26 11.24 L12.53 11.08 L12.81 10.93 L13.10 10.80 L13.40 10.69 L13.71 10.59 L14.03 10.51 L14.35 10.44 L14.68 10.39 L15.01 10.36 L15.35 10.35 L15.69 10.36 L16.04 10.39 L16.39 10.44 L16.74 10.51 L17.10 10.61 L17.47 10.74 L17.84 10.92 L18.24 11.18 L18.48 11.08 L18.57 10.61 L18.71 10.23 L18.88 9.87 L19.06 9.55 L19.26 9.25 L19.47 8.97 L19.70 8.70 L19.94 8.45 L20.18 8.22 L20.44 8.01 L20.71 7.81 L20.98 7.63 L21.26 7.46 L21.55 7.31 L21.84 7.18 L22.14 7.07 L22.44 6.97 L22.75 6.89 L23.06 6.83 L23.37 6.79 L23.69 6.76 L24.00 6.75 L24.31 6.76 L24.63 6.79 L24.94 6.83 L25.25 6.89 L25.56 6.97 L25.86 7.07 L26.16 7.18 L26.45 7.31 L26.74 7.46 L27.02 7.63 L27.29 7.81 L27.56 8.01 L27.82 8.22 L28.06 8.45 L28.30 8.70 L28.53 8.97 L28.74 9.25 L28.94 9.55 L29.12 9.87 L29.29 10.23 L29.43 10.61 L29.52 11.08 L29.76 11.18 L30.16 10.92 L30.53 10.74 L30.90 10.61 L31.26 10.51 L31.61 10.44 L31.96 10.39 L32.31 10.36 L32.65 10.35 L32.99 10.36 L33.32 10.39 L33.65 10.44 L33.97 10.51 L34.29 10.59 L34.60 10.69 L34.90 10.80 L35.19 10.93 L35.47 11.08 L35.74 11.24 L36.01 11.41 L36.26 11.60 L36.50 11.81 L36.73 12.02 L36.94 12.25 L37.15 12.49 L37.34 12.74 L37.51 13.01 L37.67 13.28 L37.82 13.56 L37.95 13.85 L38.06 14.15 L38.16 14.46 L38.24 14.78 L38.31 15.10 L38.36 15.43 L38.39 15.76 L38.40 16.10 L38.39 16.44 L38.36 16.79 L38.31 17.14 L38.24 17.49 L38.14 17.85 L38.01 18.22 L37.83 18.59 L37.57 18.99 L37.67 19.23 L38.14 19.32 L38.52 19.46 L38.88 19.63 L39.20 19.81 L39.50 20.01 L39.78 20.22 L40.05 20.45 L40.30 20.69 L40.53 20.93 L40.74 21.19 L40.94 21.46 L41.12 21.73 L41.29 22.01 L41.44 22.30 L41.57 22.59 L41.68 22.89 L41.78 23.19 L41.86 23.50 L41.92 23.81 L41.96 24.12 L41.99 24.44Z" stroke="#f5f5fa" stroke-width="3.4" stroke-linejoin="round"/><circle cx="24" cy="24.75" r="4.9" stroke="#f5f5fa" stroke-width="4"/></svg>
<svg style="position:absolute;left:52px;top:1230px" width="48" height="48" viewBox="0 0 48 48" fill="none"><g stroke="#f5f5fa" stroke-width="3.3" fill="none" stroke-linejoin="round" stroke-linecap="round"><path d="M13.75 17.9 Q13.75 16.45 15.2 16.45 H22.5 Q24 16.45 24 15 V14.1 Q24 12.65 25.5 12.65 H32.6 Q34.15 12.65 34.15 14.2 V41.7 Q34.15 43.25 32.6 43.25 H15.3 Q13.75 43.25 13.75 41.7 Z"/></g><circle cx="20.3" cy="22.6" r="1.8" fill="#f5f5fa"/><circle cx="20.3" cy="29.4" r="1.8" fill="#f5f5fa"/><circle cx="20.3" cy="36.4" r="1.8" fill="#f5f5fa"/><circle cx="27.4" cy="22.6" r="1.8" fill="#f5f5fa"/><circle cx="27.4" cy="29.4" r="1.8" fill="#f5f5fa"/><circle cx="27.4" cy="36.4" r="1.8" fill="#f5f5fa"/></svg>
<svg style="position:absolute;left:52px;top:1390px" width="48" height="44" viewBox="0 0 48 44" fill="none"><path d="M14.3 15.9 L21.9 21.95 L14.3 28 Z M37.7 15.9 L29.9 21.95 L37.7 28 Z" fill="#f5f5fa" stroke="#f5f5fa" stroke-width="3" stroke-linejoin="round"/></svg>
<svg style="position:absolute;left:646.9px;top:1348px" width="40" height="40" viewBox="0 0 40 40" fill="none"><circle cx="20" cy="20" r="13.1" stroke="#f5f5fa" stroke-width="3.2"/><path d="M20 18.5 V26.5" stroke="#f5f5fa" stroke-width="2.8"/><circle cx="20" cy="14.6" r="1.7" fill="#f5f5fa"/></svg>
<svg style="position:absolute;left:720.5px;top:1427.7px" width="40" height="40" viewBox="0 0 40 40" fill="none"><circle cx="20" cy="20" r="13.1" stroke="#f5f5fa" stroke-width="3.2"/><path d="M20 18.5 V26.5" stroke="#f5f5fa" stroke-width="2.8"/><circle cx="20" cy="14.6" r="1.7" fill="#f5f5fa"/></svg>
<svg style="position:absolute;left:996px;top:470px" width="52" height="50" viewBox="0 0 52 50" fill="none"><path d="M17.7 17 L34.1 32.9 M34.1 17 L17.7 32.9" stroke="#27475f" stroke-width="2.8"/></svg>
<svg style="position:absolute;left:1061px;top:470px" width="52" height="50" viewBox="0 0 52 50" fill="none"><path d="M15 14.2 Q15 11.7 18 11.7 H34.5 Q36.7 11.7 36.7 13.5 V32.9 H20 Q18.2 32.9 18.2 34.5 Q18.2 36 20 36 H36.7 Q36.7 38 35.5 38 H19 Q15 38 15 34 Z" fill="#27475f"/></svg>
<svg style="position:absolute;left:2567px;top:470px" width="52" height="50" viewBox="0 0 52 50" fill="none"><path d="M20.5 17.6 A9.6 9.6 0 1 1 16 25.3" stroke="#1d3b52" stroke-width="2.5" fill="none"/><path d="M17.1 15.4 L17.1 22.6 L23.6 20.6 Z" fill="#1d3b52"/></svg>
<svg style="position:absolute;left:2632px;top:470px" width="45" height="50" viewBox="0 0 45 50" fill="none"><path d="M18.4 26 L24 31 L34 19.5" stroke="#ffffff" stroke-width="3.2" fill="none"/></svg>
<div style="position:absolute;left:2625px;top:406px;width:52px;height:46px;background:#d9d9d9;border-radius:10px 0 0 0"></div>
<div style="position:absolute;left:2635px;top:416px;width:9px;height:24px;background:#a6a6a6"></div>
<div style="position:absolute;left:2647px;top:416px;width:22px;height:10px;background:#2f404d;border-radius:2px"></div>
<div style="position:absolute;left:2647px;top:430px;width:22px;height:10px;background:#2f404d;border-radius:2px"></div>
<svg style="position:absolute;left:2580px;top:430px" width="40" height="36" viewBox="0 0 40 36" fill="none"><path d="M11.7 4 H24.3 L18 11.8Z" fill="#b8b8b8"/><path d="M11.7 33.8 H24.3 L18 26.2Z" fill="#b8b8b8"/><rect x="2.8" y="17.2" width="5.4" height="3.6" rx="1.4" fill="#2f404d"/><rect x="11" y="17.2" width="5.4" height="3.6" rx="1.4" fill="#2f404d"/><rect x="19.2" y="17.2" width="5.4" height="3.6" rx="1.4" fill="#2f404d"/><rect x="27.4" y="17.2" width="5.4" height="3.6" rx="1.4" fill="#2f404d"/></svg>
<svg style="position:absolute;left:2085px;top:211px" width="48" height="49" viewBox="0 0 48 49" fill="none"><circle cx="20.5" cy="22.6" r="8.1" stroke="#222" stroke-width="2.4"/><path d="M27 30.3 L32 35.2" stroke="#a0a0a0" stroke-width="2.4" stroke-linecap="round"/></svg>
<svg style="position:absolute;left:1082px;top:691px" width="40" height="40" viewBox="0 0 40 40" fill="none"><rect x="18.1" y="10.1" width="4.2" height="17.3" fill="#222"/><rect x="18.1" y="28.5" width="4.2" height="3.5" fill="#222"/></svg>
<svg style="position:absolute;left:1082px;top:1323px" width="40" height="40" viewBox="0 0 40 40" fill="none"><rect x="18.1" y="10.1" width="4.2" height="17.3" fill="#222"/><rect x="18.1" y="28.5" width="4.2" height="3.5" fill="#222"/></svg>
</body></html>
